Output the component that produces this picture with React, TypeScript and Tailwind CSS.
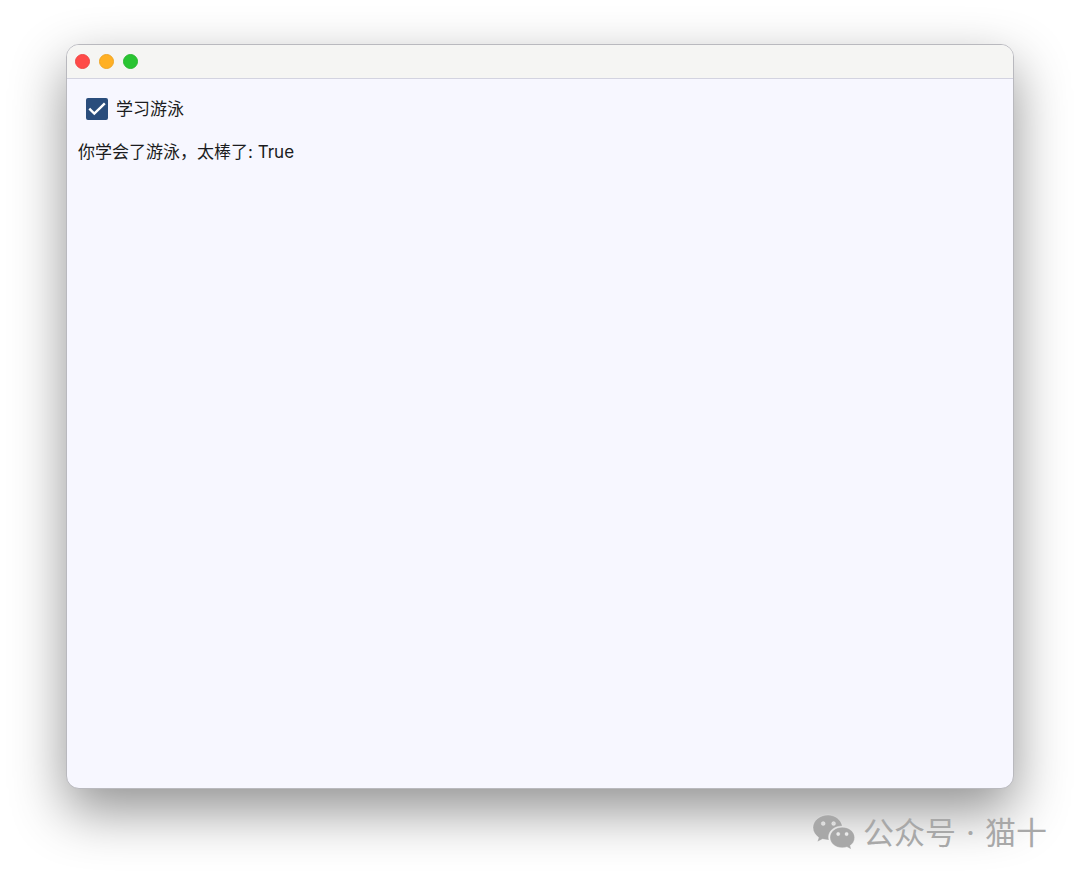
import { useState } from 'react'

function TitleBar() {
  return (
    <header className="flex h-[34px] items-center gap-[9px] border-b border-[#d3d3e0] bg-[#f5f5f3] px-2">
      <button type="button" aria-label="关闭" className="size-[15px] rounded-full border border-[#ee4644] bg-[#ff4a48]" />
      <button type="button" aria-label="最小化" className="size-[15px] rounded-full border border-[#eea525] bg-[#ffb024]" />
      <button type="button" aria-label="缩放" className="size-[15px] rounded-full border border-[#28b82f] bg-[#29c432]" />
    </header>
  )
}

function WechatIcon() {
  return (
    <svg viewBox="0 0 42 35" className="h-[35px] w-[42px] overflow-visible" fill="currentColor" stroke="#fff" strokeOpacity="0.3" strokeWidth="0.8" aria-hidden="true">
      <path
        fillRule="evenodd"
        d="M15 0C6.700 0 0 5.600 0 12.600c0 4 2.200 7.500 5.700 9.800L4.400 26.800l5.200-2.700c2 .6 4.200.9 6.400.8A10.500 10.500 0 0 1 15.500 22C15.500 15.800 21.600 11 29.300 11C28 4.600 22 0 15 0ZM10.200 6.600a2 2 0 1 1 0 4a2 2 0 0 1 0-4ZM20.600 6.600a2 2 0 1 1 0 4a2 2 0 0 1 0-4Z"
      />
      <path
        fillRule="evenodd"
        d="M29.300 12.200C22.400 12.200 17 16.800 17 22.400s5.400 10.300 12.300 10.300c1.700 0 3.300-.3 4.700-.8L38.200 34.300l-1.100-3.700c2.800-1.900 4.500-4.900 4.500-8.200c0-5.600-5.500-10.200-12.300-10.200ZM25.200 17.300a1.700 1.700 0 1 1 0 3.400a1.700 1.700 0 0 1 0-3.400ZM33.600 17.300a1.700 1.700 0 1 1 0 3.400a1.700 1.700 0 0 1 0-3.400Z"
      />
    </svg>
  )
}

export default function App() {
  const [learned, setLearned] = useState(true)

  return (
    <div
      lang="zh-CN"
      className="flex min-h-screen flex-col bg-white pt-11 font-['Inter','Noto_Sans_CJK_SC',sans-serif] text-[17px] leading-6 text-[#1b1c20]"
    >
      <div className="mx-[66px] flex flex-1 flex-col overflow-hidden rounded-[13px] border border-[#b9b9be] bg-[#f7f7ff] shadow-[0_22px_54px_rgba(0,0,0,0.43)]">
        <TitleBar />
        <main className="flex flex-col gap-[19px] px-[11px] py-[18px]">
          <label className="flex items-center gap-2 self-start pl-2">
            <span className="grid size-[22px]">
              <input
                type="checkbox"
                checked={learned}
                onChange={e => setLearned(e.target.checked)}
                className="peer col-start-1 row-start-1 size-[22px] appearance-none rounded-[2px] border-2 border-[#2a4d7c] checked:bg-[#2a4d7c]"
              />
              <svg
                viewBox="0 0 22 22"
                className="pointer-events-none col-start-1 row-start-1 hidden size-[22px] peer-checked:block"
                fill="none"
                stroke="white"
                strokeWidth="2.4"
                aria-hidden="true"
              >
                <path d="M3.300 10.600L8.300 15.600L18.800 5.400" />
              </svg>
            </span>
            学习游泳
          </label>
          <p>你学会了游泳，太棒了: {learned ? 'True' : 'False'}</p>
        </main>
      </div>

      {/* Account signature */}
      <footer className="flex h-[87px] items-center justify-end gap-2 pr-[33px] text-[31px] leading-10 text-[#a8a8a8]">
        <WechatIcon />
        <p className="flex gap-[10px]">
          <span>公众号</span>
          <span>·</span>
          <span>猫十</span>
        </p>
      </footer>
    </div>
  )
}
